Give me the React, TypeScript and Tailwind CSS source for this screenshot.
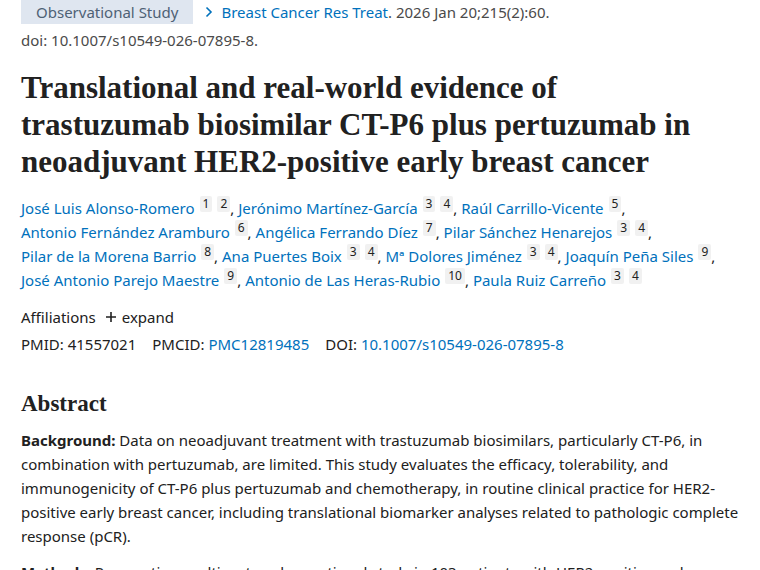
const body = "font-['Segoe_UI','Noto_Sans',sans-serif]";

type Author = { name: string; refs: string[] };

const authorLines: Author[][] = [
  [
    { name: "José Luis Alonso-Romero", refs: ["1", "2"] },
    { name: "Jerónimo Martínez-García", refs: ["3", "4"] },
    { name: "Raúl Carrillo-Vicente", refs: ["5"] },
  ],
  [
    { name: "Antonio Fernández Aramburo", refs: ["6"] },
    { name: "Angélica Ferrando Díez", refs: ["7"] },
    { name: "Pilar Sánchez Henarejos", refs: ["3", "4"] },
  ],
  [
    { name: "Pilar de la Morena Barrio", refs: ["8"] },
    { name: "Ana Puertes Boix", refs: ["3", "4"] },
    { name: "Mª Dolores Jiménez", refs: ["3", "4"] },
    { name: "Joaquín Peña Siles", refs: ["9"] },
  ],
  [
    { name: "José Antonio Parejo Maestre", refs: ["9"] },
    { name: "Antonio de Las Heras-Rubio", refs: ["10"] },
    { name: "Paula Ruiz Carreño", refs: ["3", "4"] },
  ],
];

function Sup({ n }: { n: string }) {
  return (
    <span className="relative -top-[6px] ml-[5px] inline-block rounded-[2px] bg-[#f1f1f1] px-[3px] text-[12px] leading-[16px] text-[#212121]">
      {n}
    </span>
  );
}

export default function App() {
  return (
    <div className={`${body} min-h-[570px] w-[760px] overflow-hidden bg-white pl-[21px] text-[15px] text-[#212121]`}>
      <div className="flex h-[24px] items-center">
        <span className="flex h-[24px] items-center bg-[#dfe6f0] px-[15px] text-[#4e6175]">
          Observational Study
        </span>
        <span className="ml-[11px] flex items-center text-[#0071bc]">
          <svg width="10" height="12" viewBox="0 0 10 12" className="mr-[7px]">
            <path d="M2.5 1.5 L7 6 L2.5 10.5" fill="none" stroke="#0071bc" strokeWidth="1.6" />
          </svg>
          Breast Cancer Res Treat
        </span>
        <span className="text-[#4a4a4a]">. 2026 Jan 20;215(2):60.</span>
      </div>
      <div className="mt-[5px] leading-[22px] text-[#4a4a4a]">doi: 10.1007/s10549-026-07895-8.</div>

      <h1 className="mt-[18px] font-['Liberation_Serif',serif] text-[31px] font-bold leading-[37px] text-[#212121]">
        Translational and real-world evidence of
        <br />
        trastuzumab biosimilar CT-P6 plus pertuzumab in
        <br />
        neoadjuvant HER2-positive early breast cancer
      </h1>

      <div className="mt-[16px] leading-[24px]">
        {authorLines.map((line, i) => (
          <div key={i}>
            {line.map((a, j) => (
              <span key={a.name}>
                {j > 0 && <span> </span>}
                <span className="text-[#0071bc]">{a.name}</span>
                {a.refs.map((r) => (
                  <Sup key={r} n={r} />
                ))}
                {!(i === authorLines.length - 1 && j === line.length - 1) && <span>,</span>}
              </span>
            ))}
          </div>
        ))}
      </div>

      <div className="mt-[13px] flex items-center leading-[24px]">
        <span>Affiliations</span>
        <span className="ml-[9px] flex items-center">
          <svg width="12" height="12" viewBox="0 0 12 12" className="mr-[5px]">
            <path d="M6 1 V11 M1 6 H11" stroke="#212121" strokeWidth="1.6" />
          </svg>
          expand
        </span>
      </div>
      <div className="mt-[3px] flex leading-[24px]">
        <span>PMID: 41557021</span>
        <span className="ml-[16px]">
          PMCID: <span className="text-[#0071bc]">PMC12819485</span>
        </span>
        <span className="ml-[16px]">
          DOI: <span className="text-[#0071bc]">10.1007/s10549-026-07895-8</span>
        </span>
      </div>

      <h2 className="mt-[33px] font-['Liberation_Serif',serif] text-[23px] font-bold leading-[30px]">Abstract</h2>

      <p className="mt-[9px] leading-[24px]">
        <b>Background:</b> Data on neoadjuvant treatment with trastuzumab biosimilars, particularly CT-P6, in
        <br />
        combination with pertuzumab, are limited. This study evaluates the efficacy, tolerability, and
        <br />
        immunogenicity of CT-P6 plus pertuzumab and chemotherapy, in routine clinical practice for HER2-
        <br />
        positive early breast cancer, including translational biomarker analyses related to pathologic complete
        <br />
        response (pCR).
      </p>
      <p className="mt-[12px] whitespace-nowrap leading-[24px]">
        <b>Methods:</b> Prospective, multicenter, observational study in 103 patients with HER2-positive early
      </p>
    </div>
  );
}
